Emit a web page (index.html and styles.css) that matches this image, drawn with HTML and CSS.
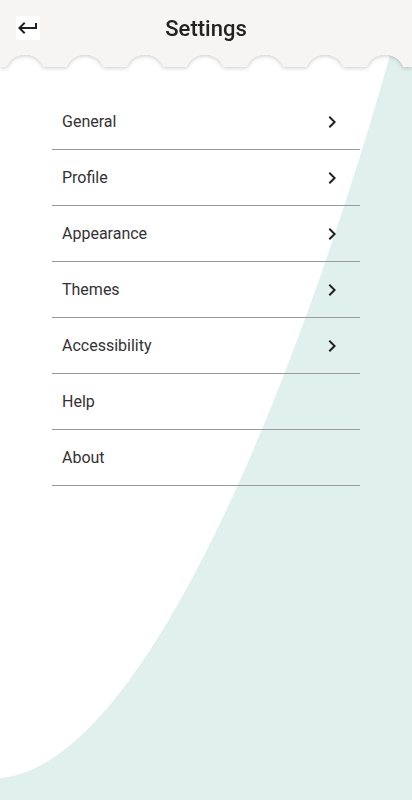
FILE: index.html
```html
<!DOCTYPE html>
<html lang="en">
<head>
    <title>Settings</title>
    <meta charset="UTF-8">
    <meta name="viewport" content="width=device-width, initial-scale=1.0">
    <link rel="stylesheet" href="styles.css">
</head>
<body>
    <svg class="backdrop" viewBox="0 0 412 800" preserveAspectRatio="none">
        <path d="M392 48 C322 300, 160 765, 0 778 L0 800 L412 800 L412 48 Z" fill="#e0f0ec"/>
    </svg>

    <div class="topbar">
        <div class="topbar-inner">
            <button class="back-btn" aria-label="Back">
                <svg viewBox="0 0 24 24" width="24" height="24">
                    <path d="M19 7v4H5.83l3.58-3.59L8 6l-6 6 6 6 1.41-1.41L5.83 13H21V7z" fill="#222"/>
                </svg>
            </button>
            <h1 class="title">Settings</h1>
        </div>
    </div>

    <ul class="menu">
        <li class="menu-item">General <span class="chev"><svg viewBox="0 0 24 24" width="24" height="24"><path d="M10 6L8.59 7.41 13.17 12l-4.58 4.59L10 18l6-6z" fill="#222"/></svg></span></li>
        <li class="menu-item">Profile <span class="chev"><svg viewBox="0 0 24 24" width="24" height="24"><path d="M10 6L8.59 7.41 13.17 12l-4.58 4.59L10 18l6-6z" fill="#222"/></svg></span></li>
        <li class="menu-item">Appearance <span class="chev"><svg viewBox="0 0 24 24" width="24" height="24"><path d="M10 6L8.59 7.41 13.17 12l-4.58 4.59L10 18l6-6z" fill="#222"/></svg></span></li>
        <li class="menu-item">Themes <span class="chev"><svg viewBox="0 0 24 24" width="24" height="24"><path d="M10 6L8.59 7.41 13.17 12l-4.58 4.59L10 18l6-6z" fill="#222"/></svg></span></li>
        <li class="menu-item">Accessibility <span class="chev"><svg viewBox="0 0 24 24" width="24" height="24"><path d="M10 6L8.59 7.41 13.17 12l-4.58 4.59L10 18l6-6z" fill="#222"/></svg></span></li>
        <li class="menu-item">Help</li>
        <li class="menu-item">About</li>
    </ul>
</body>
</html>
```

FILE: styles.css
```css
body {
    margin: 0;
    height: 800px;
    background-color: #fff;
    font-family: Roboto, "Liberation Sans", sans-serif;
    color: #2b2b2b;
    position: relative;
    overflow: hidden;
}

/* decorative teal curve behind everything */
.backdrop {
    position: absolute;
    top: 0;
    left: 0;
    width: 412px;
    height: 800px;
}

.topbar {
    position: relative;
    z-index: 1;
    filter: drop-shadow(0 1px 2px rgba(0, 0, 0, 0.2));
}

.topbar-inner {
    background-color: #f6f5f3;
    height: 67px;
    box-sizing: border-box;
    padding: 16px 16px 0;
    display: flex;
    align-items: flex-start;
    -webkit-mask: radial-gradient(circle at 25px calc(100% + 7.5px), transparent 19.5px, #000 20px) 0 0 / 60px 100% repeat-x;
    mask: radial-gradient(circle at 25px calc(100% + 7.5px), transparent 19.5px, #000 20px) 0 0 / 60px 100% repeat-x;
}

.back-btn {
    width: 24px;
    height: 24px;
    padding: 0;
    border: none;
    background-color: #fff;
    display: flex;
}

.title {
    flex: 1;
    margin: 0 24px 0 0;
    text-align: center;
    font-size: 22px;
    font-weight: 500;
    line-height: 25px;
    color: #222;
}

.menu {
    list-style: none;
    margin: 27px 52px 0;
    padding: 0;
    position: relative;
}

.menu-item {
    height: 55px;
    border-bottom: 1px solid #999;
    padding: 0 16px 0 10px;
    display: flex;
    align-items: center;
    justify-content: space-between;
    font-size: 16px;
    color: #333;
}

.chev {
    display: flex;
}
```
